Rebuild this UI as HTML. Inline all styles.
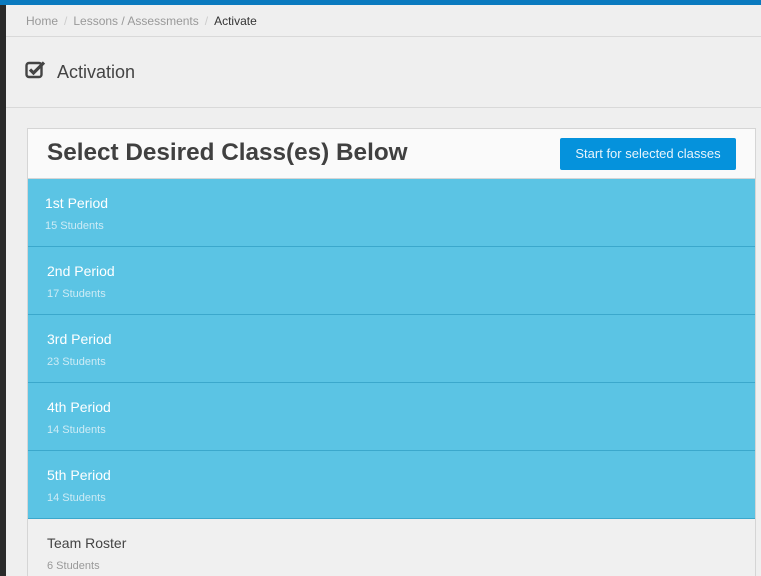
<!DOCTYPE html>
<html><head><style>
*{box-sizing:border-box;margin:0;padding:0}
html,body{width:761px;height:576px;overflow:hidden}
body{background:#efefef;font-family:"Liberation Sans",sans-serif;position:relative}
.top{position:absolute;left:0;top:0;width:761px;height:5px;background:#0a7abf}
.side{position:absolute;left:0;top:5px;width:6px;height:571px;background:#2a2a2a}
.bc{position:absolute;left:6px;top:5px;right:0;height:32px;border-bottom:1px solid #d9d9d9;font-size:12px;color:#999;padding:9px 0 0 20px}
.bc b{font-weight:normal;color:#333}
.bc span{color:#ccc;margin:0 6px}
.hd{position:absolute;left:6px;top:37px;right:0;height:71px;border-bottom:1px solid #d9d9d9;font-size:18px;color:#444;padding:23px 0 0 19px}
.panel{position:absolute;left:27px;top:128px;width:729px;height:448px;border:1px solid #d5d5d5;border-bottom:none;background:#f0f0f0;overflow:hidden}
.ph{height:50px;background:#fafafa;border-bottom:1px solid #d5d5d5;position:relative}
.ph h1{position:absolute;left:19px;top:10px;font-size:24.3px;color:#404040;font-weight:bold}
.btn{position:absolute;left:532px;top:9px;width:176px;height:32px;background:#0592dc;border-radius:2px;color:#e8f4fc;font-size:13px;text-align:center;line-height:31px}
.row{height:68px;background:#5bc4e4;border-bottom:1px solid #3ba8cc;padding:16px 0 0 19px;color:#fff}
.row .t{font-size:14px}
.row .s{font-size:11px;color:#cdebf5;margin-top:9px}
.row.g{background:#f0f0f0;border:none;color:#444}
.row.g .s{color:#999}
</style></head><body>
<div class="top"></div><div class="side"></div>
<div class="bc">Home<span>/</span>Lessons / Assessments<span>/</span><b>Activate</b></div>
<div class="hd"><svg width="22" height="20" viewBox="0 0 22 20" style="vertical-align:-2px;margin-right:10px"><rect x="1.5" y="3" width="15" height="14" rx="2.5" fill="none" stroke="#444" stroke-width="2.4"/><path d="M5 9.5l3.5 3.5L19 2.5" fill="none" stroke="#444" stroke-width="3.2"/></svg>Activation</div>
<div class="panel">
<div class="ph"><h1>Select Desired Class(es) Below</h1><div class="btn">Start for selected classes</div></div>
<div class="row" style="padding-left:17px"><div class="t">1st Period</div><div class="s">15 Students</div></div>
<div class="row"><div class="t">2nd Period</div><div class="s">17 Students</div></div>
<div class="row"><div class="t">3rd Period</div><div class="s">23 Students</div></div>
<div class="row"><div class="t">4th Period</div><div class="s">14 Students</div></div>
<div class="row"><div class="t">5th Period</div><div class="s">14 Students</div></div>
<div class="row g"><div class="t">Team Roster</div><div class="s">6 Students</div></div>
</div>
</body></html>
